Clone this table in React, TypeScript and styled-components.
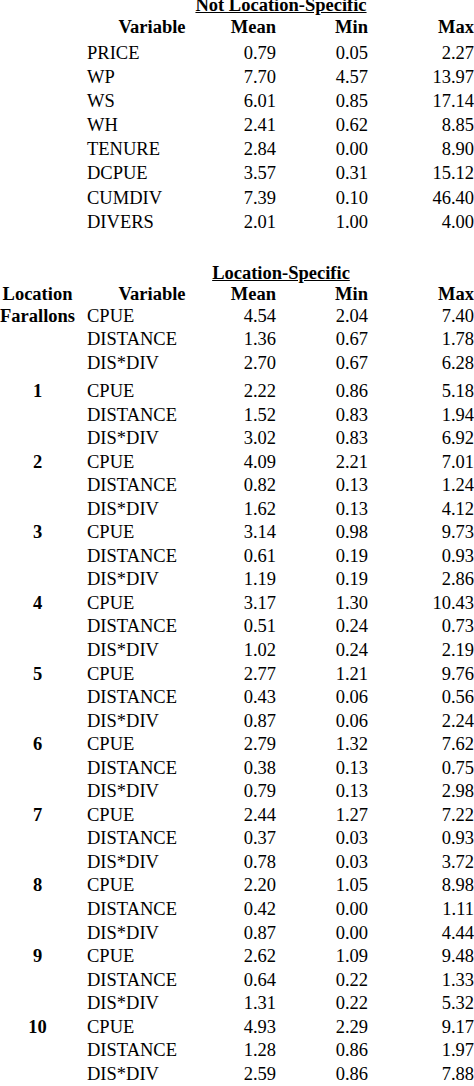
import styled, { createGlobalStyle } from 'styled-components'

type Stat = [string, string, string, string]

const general: Stat[] = [
  ['PRICE', '0.79', '0.05', '2.27'],
  ['WP', '7.70', '4.57', '13.97'],
  ['WS', '6.01', '0.85', '17.14'],
  ['WH', '2.41', '0.62', '8.85'],
  ['TENURE', '2.84', '0.00', '8.90'],
  ['DCPUE', '3.57', '0.31', '15.12'],
  ['CUMDIV', '7.39', '0.10', '46.40'],
  ['DIVERS', '2.01', '1.00', '4.00'],
]

const byLocation: { name: string; rows: Stat[] }[] = [
  { name: 'Farallons', rows: [['CPUE', '4.54', '2.04', '7.40'], ['DISTANCE', '1.36', '0.67', '1.78'], ['DIS*DIV', '2.70', '0.67', '6.28']] },
  { name: '1', rows: [['CPUE', '2.22', '0.86', '5.18'], ['DISTANCE', '1.52', '0.83', '1.94'], ['DIS*DIV', '3.02', '0.83', '6.92']] },
  { name: '2', rows: [['CPUE', '4.09', '2.21', '7.01'], ['DISTANCE', '0.82', '0.13', '1.24'], ['DIS*DIV', '1.62', '0.13', '4.12']] },
  { name: '3', rows: [['CPUE', '3.14', '0.98', '9.73'], ['DISTANCE', '0.61', '0.19', '0.93'], ['DIS*DIV', '1.19', '0.19', '2.86']] },
  { name: '4', rows: [['CPUE', '3.17', '1.30', '10.43'], ['DISTANCE', '0.51', '0.24', '0.73'], ['DIS*DIV', '1.02', '0.24', '2.19']] },
  { name: '5', rows: [['CPUE', '2.77', '1.21', '9.76'], ['DISTANCE', '0.43', '0.06', '0.56'], ['DIS*DIV', '0.87', '0.06', '2.24']] },
  { name: '6', rows: [['CPUE', '2.79', '1.32', '7.62'], ['DISTANCE', '0.38', '0.13', '0.75'], ['DIS*DIV', '0.79', '0.13', '2.98']] },
  { name: '7', rows: [['CPUE', '2.44', '1.27', '7.22'], ['DISTANCE', '0.37', '0.03', '0.93'], ['DIS*DIV', '0.78', '0.03', '3.72']] },
  { name: '8', rows: [['CPUE', '2.20', '1.05', '8.98'], ['DISTANCE', '0.42', '0.00', '1.11'], ['DIS*DIV', '0.87', '0.00', '4.44']] },
  { name: '9', rows: [['CPUE', '2.62', '1.09', '9.48'], ['DISTANCE', '0.64', '0.22', '1.33'], ['DIS*DIV', '1.31', '0.22', '5.32']] },
  { name: '10', rows: [['CPUE', '4.93', '2.29', '9.17'], ['DISTANCE', '1.28', '0.86', '1.97'], ['DIS*DIV', '2.59', '0.86', '7.88']] },
]

function App() {
  return (
    <>
      <GlobalStyle />
      <Page>
        <Section>
          <Row $h={22}>
            <Title>Not Location-Specific</Title>
          </Row>
          <Row $h={22}>
            <Loc />
            <HeadVar>Variable</HeadVar>
            <Head>Mean</Head>
            <Head>Min</Head>
            <Head>Max</Head>
          </Row>
          <Body $top={3}>
            {general.map(r => (
              <Row key={r[0]} $h={24.1}>
                <Loc />
                <Var>{r[0]}</Var>
                <Num>{r[1]}</Num>
                <Num>{r[2]}</Num>
                <Num>{r[3]}</Num>
              </Row>
            ))}
          </Body>
        </Section>

        <Section $top={28}>
          <Row $h={22}>
            <Title>Location-Specific</Title>
          </Row>
          <Row $h={21}>
            <Loc>Location</Loc>
            <HeadVar>Variable</HeadVar>
            <Head>Mean</Head>
            <Head>Min</Head>
            <Head>Max</Head>
          </Row>
          {byLocation.map((g, gi) => (
            <Group key={g.name} $after={gi === 0 ? 4.6 : 0}>
              {g.rows.map((r, i) => (
                <Row key={r[0]} $h={23.55}>
                  <Loc>{i === 0 ? g.name : ''}</Loc>
                  <Var>{r[0]}</Var>
                  <Num>{r[1]}</Num>
                  <Num>{r[2]}</Num>
                  <Num>{r[3]}</Num>
                </Row>
              ))}
            </Group>
          ))}
        </Section>
      </Page>
    </>
  )
}

const GlobalStyle = createGlobalStyle`
  html, body {
    margin:0;
    padding:0;
    background:#fff;
    overflow:hidden;
  }
  body {
    font-family:"Liberation Serif", "Times New Roman", serif;
    color:#000;
  }
`
const Page = styled.div`
  width:474px;
  margin-top:-6px;
  font-size:18.5px;
`
const Section = styled.div<{ $top?: number }>`
  display:flex;
  flex-direction:column;
  margin-top:${p => p.$top ?? 0}px;
`
const Body = styled.div<{ $top?: number }>`
  display:flex;
  flex-direction:column;
  margin-top:${p => p.$top ?? 0}px;
`
const Group = styled.div<{ $after: number }>`
  display:flex;
  flex-direction:column;
  margin-bottom:${p => p.$after}px;
`
const Row = styled.div<{ $h: number }>`
  display:grid;
  grid-template-columns:87px 130px 59px 92px 106px;
  height:${p => p.$h}px;
  line-height:${p => p.$h}px;
  white-space:nowrap;
`
const Title = styled.div`
  grid-column:2 / -1;
  text-align:center;
  font-weight:bold;
  text-decoration:underline;
  padding-left:1px;
`
const Loc = styled.div`
  width:75px;
  text-align:center;
  font-weight:bold;
`
const HeadVar = styled.div`
  text-align:center;
  font-weight:bold;
`
const Head = styled.div`
  text-align:right;
  font-weight:bold;
`
const Var = styled.div`
  text-align:left;
`
const Num = styled.div`
  text-align:right;
`
export default App
